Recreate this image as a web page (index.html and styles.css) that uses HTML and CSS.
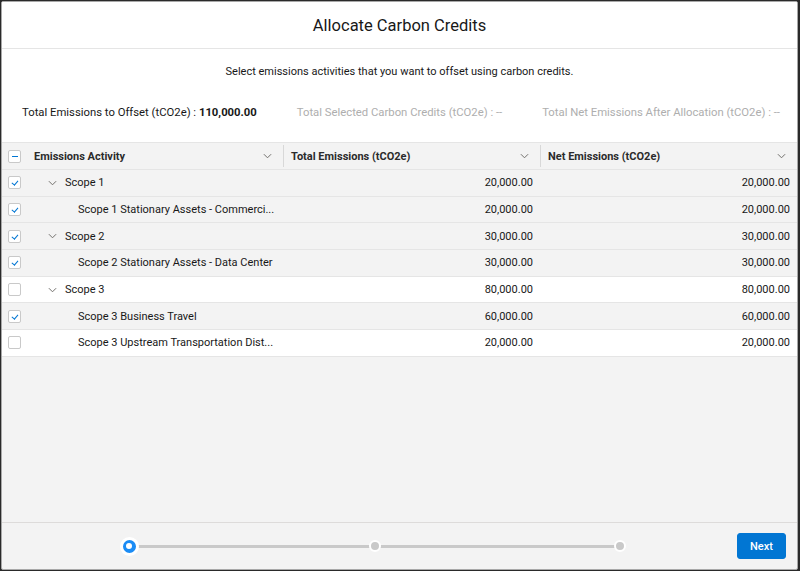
FILE: index.html
```html
<!DOCTYPE html>
<html lang="en">
<head>
<meta charset="UTF-8" />
<meta name="viewport" content="width=device-width, initial-scale=1" />
<title>Allocate Carbon Credits</title>
<link rel="stylesheet" href="styles.css">
</head>
<body>
  <div class="modal">
    <header class="modal-header">
      <h2>Allocate Carbon Credits</h2>
    </header>

    <div class="modal-content">
      <p class="intro">Select emissions activities that you want to offset using carbon credits.</p>
      <div class="totals">
        <span>Total Emissions to Offset (tCO2e) : <b>110,000.00</b></span>
        <span class="muted">Total Selected Carbon Credits (tCO2e) : --</span>
        <span class="muted">Total Net Emissions After Allocation (tCO2e) : --</span>
      </div>

      <div class="grid">
        <div class="row head">
          <div class="cell check"><span class="box mixed"></span></div>
          <div class="cell label">Emissions Activity <svg class="chev" viewBox="0 0 10 6"><path d="M1 1l4 4 4-4"/></svg></div>
          <div class="cell label sep">Total Emissions (tCO2e) <svg class="chev" viewBox="0 0 10 6"><path d="M1 1l4 4 4-4"/></svg></div>
          <div class="cell label sep">Net Emissions (tCO2e) <svg class="chev" viewBox="0 0 10 6"><path d="M1 1l4 4 4-4"/></svg></div>
        </div>

        <div class="row selected">
          <div class="cell check"><span class="box checked"></span></div>
          <div class="cell name parent"><svg class="toggle" viewBox="0 0 10 6"><path d="M1 1l4 4 4-4"/></svg>Scope 1</div>
          <div class="cell num">20,000.00</div>
          <div class="cell num">20,000.00</div>
        </div>
        <div class="row selected">
          <div class="cell check"><span class="box checked"></span></div>
          <div class="cell name child" title="Scope 1 Stationary Assets - Commercial Building">Scope 1 Stationary Assets - Commerci...</div>
          <div class="cell num">20,000.00</div>
          <div class="cell num">20,000.00</div>
        </div>
        <div class="row selected">
          <div class="cell check"><span class="box checked"></span></div>
          <div class="cell name parent"><svg class="toggle" viewBox="0 0 10 6"><path d="M1 1l4 4 4-4"/></svg>Scope 2</div>
          <div class="cell num">30,000.00</div>
          <div class="cell num">30,000.00</div>
        </div>
        <div class="row selected">
          <div class="cell check"><span class="box checked"></span></div>
          <div class="cell name child">Scope 2 Stationary Assets - Data Center</div>
          <div class="cell num">30,000.00</div>
          <div class="cell num">30,000.00</div>
        </div>
        <div class="row">
          <div class="cell check"><span class="box"></span></div>
          <div class="cell name parent"><svg class="toggle" viewBox="0 0 10 6"><path d="M1 1l4 4 4-4"/></svg>Scope 3</div>
          <div class="cell num">80,000.00</div>
          <div class="cell num">80,000.00</div>
        </div>
        <div class="row selected">
          <div class="cell check"><span class="box checked"></span></div>
          <div class="cell name child">Scope 3 Business Travel</div>
          <div class="cell num">60,000.00</div>
          <div class="cell num">60,000.00</div>
        </div>
        <div class="row">
          <div class="cell check"><span class="box"></span></div>
          <div class="cell name child" title="Scope 3 Upstream Transportation Distribution">Scope 3 Upstream Transportation Dist...</div>
          <div class="cell num">20,000.00</div>
          <div class="cell num">20,000.00</div>
        </div>
      </div>
    </div>

    <footer class="modal-footer">
      <div class="progress">
        <span class="step current"><i></i></span>
        <span class="step"><i></i></span>
        <span class="step"><i></i></span>
      </div>
      <button class="btn-brand">Next</button>
    </footer>
  </div>
</body>
</html>
```

FILE: styles.css
```css
html, body {
  margin: 0;
  height: 100%;
}
body {
  background-color: #2a2a2a;
  font-family: Roboto, "Liberation Sans", Arial, sans-serif;
  font-size: 11px;
  color: #181818;
  padding: 1px 0 0 1px;
  box-sizing: border-box;
}
.modal {
  width: 797px;
  height: 569px;
  box-sizing: border-box;
  border: 1px solid #a8a8a8;
  border-radius: 2px;
  background-color: #f3f3f3;
  display: flex;
  flex-direction: column;
  overflow: hidden;
}
.modal-header {
  height: 46px;
  background-color: #fff;
  border-bottom: 1px solid #e5e5e5;
  display: flex;
  align-items: center;
  justify-content: center;
}
.modal-header h2 {
  margin: 0;
  font-size: 16.5px;
  font-weight: 400;
}
.modal-content {
  flex: 1;
}
.intro {
  margin: 0;
  padding-top: 15px;
  line-height: 16px;
  text-align: center;
  background-color: #fff;
}
.totals {
  display: flex;
  justify-content: space-between;
  padding: 25px 17px 21px 20px;
  font-size: 11.3px;
  line-height: 16px;
  background-color: #fff;
}
.totals b {
  font-weight: 700;
}
.muted {
  color: #aeaeae;
}

/* tree grid */
.grid {
  border-top: 1px solid #e5e5e5;
}
.row {
  display: grid;
  grid-template-columns: 26px 255px 257px 1fr;
  height: 25.7px;
  border-bottom: 1px solid #e5e5e5;
  background-color: #fff;
}
.row.selected,
.row.head {
  background-color: #f3f3f3;
}
.row.head {
  height: 26px;
}
.cell {
  display: flex;
  align-items: center;
  min-width: 0;
  white-space: nowrap;
}
.cell.check {
  padding-left: 6px;
}
.cell.label {
  font-weight: 700;
  color: #2b2b2b;
  padding: 0 11px 0 8px;
  justify-content: space-between;
}
.row.head .cell.label:nth-child(2) {
  padding-left: 6px;
}
.cell.sep {
  position: relative;
}
.cell.sep::before {
  content: "";
  position: absolute;
  left: 0;
  top: 2px;
  bottom: 2px;
  width: 1px;
  background-color: #d8d8d8;
}
.chev,
.toggle {
  width: 9px;
  height: 6px;
  fill: none;
  stroke: #706e6b;
  stroke-width: 1.1;
}
.cell.name.parent {
  padding-left: 20px;
}
.cell.name.parent .toggle {
  margin-right: 8px;
}
.cell.name.child {
  padding-left: 50px;
}
.cell.num {
  justify-content: flex-end;
  padding-right: 7px;
}

.box {
  width: 13px;
  height: 13px;
  box-sizing: border-box;
  border: 1px solid #c9c9c9;
  border-radius: 2px;
  background-color: #fff;
  position: relative;
}
.box.checked::after {
  content: "";
  position: absolute;
  left: 3.5px;
  top: 2px;
  width: 2.5px;
  height: 5px;
  border: solid #0176d3;
  border-width: 0 1.6px 1.6px 0;
  transform: rotate(40deg);
}
.box.mixed::after {
  content: "";
  position: absolute;
  left: 2.5px;
  top: 5px;
  width: 6px;
  height: 1.5px;
  background-color: #0176d3;
}

/* footer */
.modal-footer {
  height: 46px;
  border-top: 1px solid #dddbda;
  display: flex;
  align-items: center;
  padding-right: 11px;
}
.progress {
  margin-left: 117px;
  width: 511px;
  display: flex;
  justify-content: space-between;
  background: linear-gradient(#c9c9c9, #c9c9c9) no-repeat center / calc(100% - 20px) 3px;
}
.step {
  width: 20px;
  height: 20px;
  display: flex;
  align-items: center;
  justify-content: center;
}
.step i {
  width: 12px;
  height: 12px;
  box-sizing: border-box;
  border: 2.5px solid #fff;
  border-radius: 50%;
  background-color: #c9c9c9;
}
.step.current i {
  width: 19px;
  height: 19px;
  border: 3px solid #fff;
  background-color: #1b8cf5;
  position: relative;
}
.step.current i::after {
  content: "";
  position: absolute;
  left: 3.5px;
  top: 3.5px;
  width: 6px;
  height: 6px;
  border-radius: 50%;
  background-color: #fff;
}
.btn-brand {
  margin-left: auto;
  width: 49px;
  height: 26px;
  border: 1px solid #0176d3;
  border-radius: 3px;
  background-color: #0176d3;
  color: #fff;
  font-family: inherit;
  font-size: 11px;
  font-weight: 500;
  padding: 0;
  cursor: pointer;
}
```
